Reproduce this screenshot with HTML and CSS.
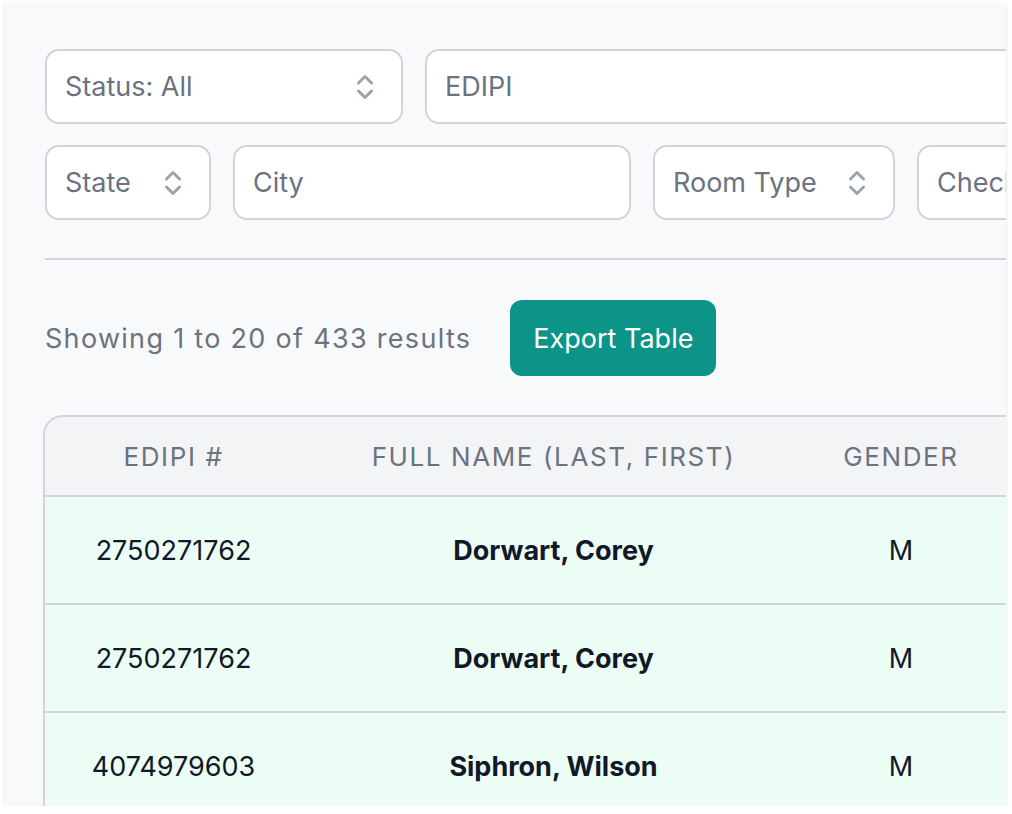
FILE: index.html
```html
<!DOCTYPE html>
<html lang="en">
<head>
    <meta charset="UTF-8">
    <meta name="viewport" content="width=device-width, initial-scale=1.0">
    <title>Occupants</title>
    <link rel="stylesheet" href="styles.css">
</head>
<body>
    <div class="panel">

        <!-- Filters -->
        <div class="filters">
            <div class="filter-row">
                <div class="field select status-select">
                    <span>Status: All</span>
                    <svg class="chevrons" viewBox="0 0 18 26"><polyline points="2.5,9 9,2.5 15.5,9"/><polyline points="2.5,17 9,23.5 15.5,17"/></svg>
                </div>
                <div class="field edipi-input">EDIPI</div>
            </div>
            <div class="filter-row">
                <div class="field select state-select">
                    <span>State</span>
                    <svg class="chevrons" viewBox="0 0 18 26"><polyline points="2.5,9 9,2.5 15.5,9"/><polyline points="2.5,17 9,23.5 15.5,17"/></svg>
                </div>
                <div class="field city-input">City</div>
                <div class="field select room-select">
                    <span>Room Type</span>
                    <svg class="chevrons" viewBox="0 0 18 26"><polyline points="2.5,9 9,2.5 15.5,9"/><polyline points="2.5,17 9,23.5 15.5,17"/></svg>
                </div>
                <div class="field checkin-input">Check In Date</div>
            </div>
        </div>

        <hr class="divider">

        <!-- Results summary -->
        <div class="results-bar">
            <p class="results-count">Showing 1 to 20 of 433 results</p>
            <button class="export-btn">Export Table</button>
        </div>

        <!-- Occupants table -->
        <div class="table-wrap">
            <table class="occupants">
                <thead>
                    <tr>
                        <th class="col-edipi">EDIPI #</th>
                        <th class="col-name">Full Name (Last, First)</th>
                        <th class="col-gender">Gender</th>
                        <th class="col-state">State</th>
                    </tr>
                </thead>
                <tbody>
                    <tr>
                        <td>2750271762</td>
                        <td class="name">Dorwart, Corey</td>
                        <td>M</td>
                        <td>VA</td>
                    </tr>
                    <tr>
                        <td>2750271762</td>
                        <td class="name">Dorwart, Corey</td>
                        <td>M</td>
                        <td>VA</td>
                    </tr>
                    <tr>
                        <td>4074979603</td>
                        <td class="name">Siphron, Wilson</td>
                        <td>M</td>
                        <td>NC</td>
                    </tr>
                </tbody>
            </table>
        </div>
    </div>
</body>
</html>
```

FILE: styles.css
```css
body {
    margin: 0;
    background: #ffffff;
    font-family: 'Inter', 'Roboto', sans-serif;
}

.panel {
    margin: 3px 6px 0 5px;
    height: 803px;
    padding: 46px 0 0 40px;
    box-sizing: border-box;
    background: #f8f9fb;
    box-shadow: 0 1px 4px rgba(0, 0, 0, 0.12);
    overflow: hidden;
}

/* Filters */
.filters {
    display: flex;
    flex-direction: column;
    gap: 21px;
}

.filter-row {
    display: flex;
    gap: 22px;
}

.field {
    flex-shrink: 0;
    height: 75px;
    box-sizing: border-box;
    display: flex;
    align-items: center;
    padding: 0 27px 0 18px;
    background: #ffffff;
    border: 2px solid #d1d5db;
    border-radius: 14px;
    font-size: 27px;
    color: #6b7280;
    white-space: nowrap;
}

.select {
    justify-content: space-between;
}

.chevrons {
    width: 18px;
    height: 26px;
    fill: none;
    stroke: #9ca3af;
    stroke-width: 3;
    stroke-linecap: round;
    stroke-linejoin: round;
}

.status-select { width: 358px; }
.edipi-input { width: 720px; }
.state-select { width: 166px; }
.city-input { width: 398px; }
.room-select { width: 242px; }
.checkin-input { width: 320px; }

.divider {
    margin: 38px 0 0 0;
    height: 2px;
    border: none;
    background: #d1d5db;
}

/* Results summary */
.results-bar {
    display: flex;
    align-items: center;
    gap: 39px;
    margin-top: 40px;
}

.results-count {
    margin: 0;
    font-size: 27px;
    letter-spacing: 1.3px;
    color: #6b7280;
}

.export-btn {
    width: 206px;
    height: 76px;
    background: #0d9488;
    color: #ffffff;
    border: none;
    border-radius: 12px;
    font-family: inherit;
    font-size: 27px;
    cursor: pointer;
}

.export-btn:hover {
    background: #0f766e;
}

/* Table */
.table-wrap {
    margin: 39px 0 0 -2px;
    width: 1300px;
    border: 2px solid #d1d5db;
    border-radius: 20px 20px 0 0;
    overflow: hidden;
}

.occupants {
    width: 100%;
    border-collapse: collapse;
    table-layout: fixed;
}

.occupants th {
    height: 78px;
    padding: 0;
    background: #f3f4f6;
    border-bottom: 2px solid #d1d5db;
    font-size: 26px;
    font-weight: 400;
    text-transform: uppercase;
    letter-spacing: 1.6px;
    color: #6b7280;
    text-align: center;
}

.col-edipi { width: 257px; }
.col-name { width: 503px; }
.col-gender { width: 192px; }

.occupants td {
    height: 106px;
    padding: 0;
    background: #ecfdf5;
    border-bottom: 2px solid #d1d5db;
    font-size: 27px;
    color: #111827;
    text-align: center;
}

.occupants td.name {
    font-weight: 700;
}
```
